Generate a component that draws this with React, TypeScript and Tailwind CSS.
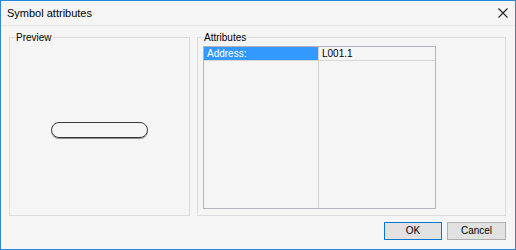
export default function App() {
  return (
    <div className="w-[516px] h-[250px] border border-[#2b88d8] bg-[#f5f5f5] flex flex-col font-['Liberation_Sans',Arial,sans-serif] text-[10px] text-black">
      {/* title bar */}
      <div className="h-[25px] shrink-0 flex items-center justify-between pl-[6px] pr-[6px] border-b border-[#e6e6e6]">
        <span className="text-[11px] leading-[14px]">Symbol attributes</span>
        <svg width="10" height="10" viewBox="0 0 10 10" className="mr-[1px] -mt-[1px]">
          <path d="M0.5 0.5 L9.5 9.5 M9.5 0.5 L0.5 9.5" stroke="#222" strokeWidth="1.1" fill="none" />
        </svg>
      </div>

      <div className="flex-1 flex flex-col">
        <div className="flex gap-[7px] pl-[8px] pt-[11px]">
          {/* Preview group */}
          <div className="relative w-[181px] h-[179px] border border-[#dcdcdc] flex items-center justify-center pt-[7px]">
            <span className="absolute -top-[6px] left-[5px] px-[1px] bg-[#f5f5f5] leading-[12px]">Preview</span>
            <div className="w-[97px] h-[16px] rounded-full border border-[#3a3a3a] shadow-[0_1px_0_#8a8a8a]" />
          </div>

          {/* Attributes group */}
          <div className="relative w-[309px] h-[179px] border border-[#dcdcdc] pl-[5px] pt-[8px]">
            <span className="absolute -top-[6px] left-[5px] px-[1px] bg-[#f5f5f5] leading-[12px]">Attributes</span>
            <div className="w-[233px] h-[163px] border border-[#b7b2bd] flex">
              <div className="w-[115px] border-r border-[#cfcfcf] flex flex-col">
                <div className="h-[14px] bg-[#3399ff] text-white pl-[3px] leading-[14px] border-b border-[#d6d6d6]">
                  Address:
                </div>
              </div>
              <div className="flex-1 flex flex-col">
                <div className="h-[14px] pl-[3px] leading-[14px] border-b border-[#d6d6d6]">L001.1</div>
              </div>
            </div>
          </div>
        </div>

        {/* buttons */}
        <div className="flex justify-end gap-[5px] pr-[9px] pt-[6px]">
          <button className="w-[58px] h-[18px] bg-[#e1e1e1] border border-[#0078d7] leading-[16px]">OK</button>
          <button className="w-[59px] h-[18px] bg-[#e1e1e1] border border-[#adadad] leading-[16px]">Cancel</button>
        </div>
      </div>
    </div>
  );
}
